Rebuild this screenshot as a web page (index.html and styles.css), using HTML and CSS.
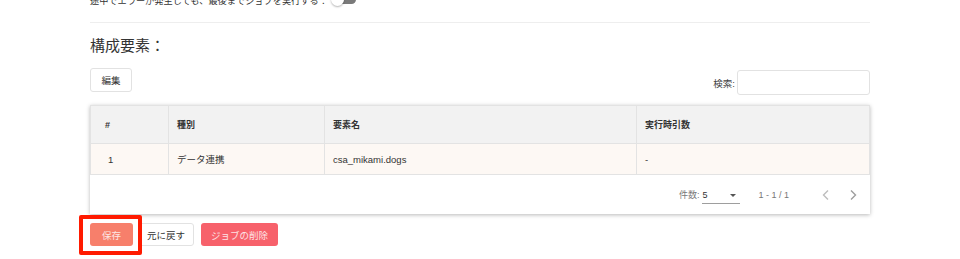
FILE: index.html
```html
<!DOCTYPE html>
<html lang="ja">
<head>
<meta charset="utf-8">
<link rel="stylesheet" href="styles.css">
</head>
<body>
<div class="page">
  <div class="opt">
    <span class="opt-label">途中でエラーが発生しても、最後までジョブを実行する：</span>
    <span class="toggle"><span class="thumb"></span></span>
  </div>
  <div class="sep"></div>
  <h2 class="heading">構成要素：</h2>
  <div class="toolbar">
    <button class="btn btn-plain btn-edit">編集</button>
    <label class="search"><span>検索:</span><span class="search-input"></span></label>
  </div>
  <div class="card">
    <table class="grid">
      <colgroup>
        <col class="c1"><col class="c2"><col class="c3"><col class="c4">
      </colgroup>
      <thead>
        <tr><th class="first">#</th><th>種別</th><th>要素名</th><th>実行時引数</th></tr>
      </thead>
      <tbody>
        <tr><td class="first">1</td><td>データ連携</td><td>csa_mikami.dogs</td><td>-</td></tr>
      </tbody>
    </table>
    <div class="footer">
      <span class="f-label">件数:</span>
      <span class="select"><span>5</span><span class="caret"></span></span>
      <span class="range">1 - 1 / 1</span>
      <span class="nav">
        <svg width="10" height="12" viewBox="0 0 10 12"><path d="M7 1.5 L2.5 6 L7 10.5" fill="none" stroke="#bdbdbd" stroke-width="1.4"/></svg>
        <svg width="10" height="12" viewBox="0 0 10 12"><path d="M3 1.5 L7.5 6 L3 10.5" fill="none" stroke="#9e9e9e" stroke-width="1.4"/></svg>
      </span>
    </div>
  </div>
  <div class="actions">
    <button class="btn btn-save">保存</button>
    <button class="btn btn-plain btn-revert">元に戻す</button>
    <button class="btn btn-delete">ジョブの削除</button>
    <span class="highlight"></span>
  </div>
</div>
</body>
</html>
```
FILE: styles.css
```css
html, body {
  margin: 0;
  padding: 0;
  background: #fff;
}
body {
  font-family: "Liberation Sans", "Noto Sans CJK JP", sans-serif;
  color: #333;
  overflow: hidden;
  height: 259px;
}
.page {
  width: 780px;
  margin-left: 90px;
}
.opt {
  display: flex;
  align-items: center;
  height: 16px;
  margin-top: -8px;
  font-size: 9.2px;
  color: #333;
}
.toggle {
  position: relative;
  display: inline-block;
  width: 22px;
  height: 9px;
  border-radius: 5px;
  background: #7a7a7a;
  margin-left: 6px;
  margin-top: -2px;
}
.thumb {
  position: absolute;
  left: -3px;
  top: -2px;
  width: 13px;
  height: 13px;
  border-radius: 50%;
  background: #fff;
  box-shadow: 0 1px 2px rgba(0,0,0,.3);
}
.sep {
  margin-top: 14px;
  border-top: 1px solid #eee;
}
.heading {
  margin: 13px 0 0;
  font-size: 15px;
  line-height: 20px;
  font-weight: 400;
  color: #333;
}
.toolbar {
  display: flex;
  justify-content: space-between;
  align-items: flex-end;
  margin-top: 12px;
  height: 27px;
}
.btn {
  font-family: inherit;
  font-size: 9.5px;
  height: 24px;
  border-radius: 3px;
  padding: 0;
  border: 1px solid transparent;
  cursor: pointer;
}
.btn-plain {
  background: #fff;
  border-color: #e2e2e2;
  color: #333;
}
.btn-edit {
  width: 42px;
  align-self: flex-start;
}
.search {
  display: flex;
  align-items: center;
  font-size: 9.5px;
  color: #444;
}
.search-input {
  display: inline-block;
  width: 131px;
  height: 23px;
  border: 1px solid #e2e2e2;
  border-radius: 3px;
  margin-left: 2px;
}
.card {
  margin-top: 10px;
  background: #fff;
  box-shadow: 0 1px 4px rgba(0,0,0,.28);
}
.grid {
  width: 779px;
  border-collapse: collapse;
  table-layout: fixed;
  font-size: 9.5px;
}
.c1 { width: 78px; }
.c2 { width: 156px; }
.c3 { width: 312px; }
.c4 { width: 233px; }
.grid th, .grid td {
  border: 1px solid #e3e3e3;
  text-align: left;
  padding: 0 0 0 8px;
}
.grid th {
  background: #f2f2f2;
  height: 37px;
  font-weight: 700;
  font-size: 9px;
  color: #333;
}
.grid td {
  background: #fdf8f4;
  height: 30px;
  color: #333;
}
.grid th.first { padding-left: 14px; }
.grid td.first { padding-left: 17px; }
.footer {
  display: flex;
  align-items: center;
  justify-content: flex-end;
  height: 39px;
  font-size: 9px;
  color: #777;
  padding-right: 12px;
}
.f-label {
  margin-right: 3px;
}
.select {
  position: relative;
  display: flex;
  align-items: center;
  width: 38px;
  height: 16px;
  border-bottom: 1px solid #9e9e9e;
  color: #333;
  margin-top: 2px;
}
.caret {
  position: absolute;
  right: 4px;
  top: 7px;
  width: 0;
  height: 0;
  border-left: 3.5px solid transparent;
  border-right: 3.5px solid transparent;
  border-top: 3.5px solid #555;
}
.range {
  margin-left: 18px;
}
.nav {
  display: flex;
  gap: 17px;
  margin-left: 32px;
}
.nav svg { display: block; }
.actions {
  position: relative;
  display: flex;
  align-items: center;
  margin-top: 9px;
}
.btn-save {
  width: 43px;
  height: 23px;
  background: #f77f6b;
  color: #fde6e2;
}
.btn-revert {
  width: 56px;
  height: 23px;
  margin-left: 5px;
}
.btn-delete {
  width: 77px;
  height: 23px;
  margin-left: 7px;
  background: #f7616b;
  color: #fde2e4;
}
.highlight {
  position: absolute;
  left: -11px;
  top: -8px;
  width: 55px;
  height: 32px;
  border: 4px solid #ff1a00;
  border-radius: 2px;
}
```
